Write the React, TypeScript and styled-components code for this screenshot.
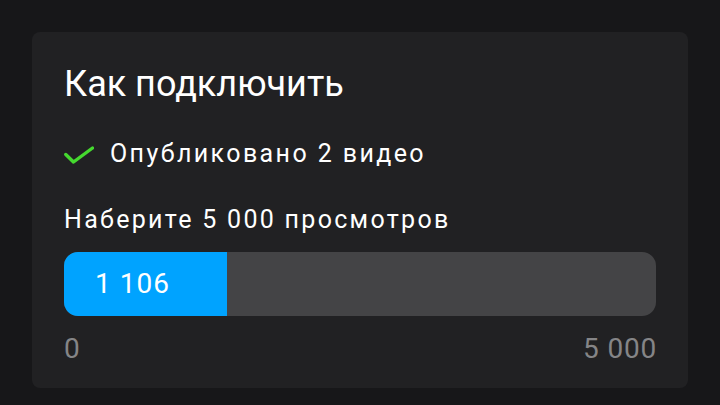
import React from "react";
import styled, { createGlobalStyle } from "styled-components";

const GlobalStyle = createGlobalStyle`
  html, body {
    margin: 0;
    padding: 0;
    background: #171719;
    font-family: Roboto, "Noto Sans", sans-serif;
    color: #fff;
  }
`;

const Page = styled.div`
  width: 720px;
  height: 405px;
  box-sizing: border-box;
  padding: 32px 32px 17px 32px;
  display: flex;
`;

const Card = styled.section`
  flex: 1;
  background: #212123;
  border-radius: 8px;
  padding: 30px 32px 0 32px;
  display: flex;
  flex-direction: column;
`;

const Title = styled.h2`
  margin: 0;
  font-size: 36px;
  font-weight: 400;
  line-height: 44px;
`;

const Step = styled.div`
  display: flex;
  align-items: center;
  gap: 16px;
  margin-top: 32px;
  font-size: 25px;
  line-height: 32px;
  letter-spacing: 2.4px;
`;

const Goal = styled.div`
  margin-top: 34px;
  font-size: 25px;
  line-height: 32px;
  letter-spacing: 2.3px;
`;

const Track = styled.div`
  margin-top: 16px;
  height: 64px;
  border-radius: 14px;
  background: #444446;
  overflow: hidden;
  display: flex;
`;

const Fill = styled.div`
  background: #00a3ff;
  display: flex;
  align-items: center;
  padding-left: 31px;
  box-sizing: border-box;
  font-size: 28px;
  line-height: 32px;
  letter-spacing: 1px;
`;

const Scale = styled.div`
  display: flex;
  justify-content: space-between;
  margin-top: 17px;
  font-size: 28px;
  line-height: 32px;
  letter-spacing: 0.8px;
  color: #858587;

  span:last-child {
    margin-right: -1px;
  }
`;

function Check() {
  return (
    <svg width="30" height="22" viewBox="0 0 30 22" fill="none">
      <path
        d="M1.8 11.5 L9.5 19 L28.5 5"
        stroke="#45d92f"
        strokeWidth="3.4"
        strokeLinecap="round"
        strokeLinejoin="round"
      />
    </svg>
  );
}

export default function App() {
  const views = 1106;
  const goal = 5000;
  // the fill keeps room for its label even at low counts
  const share = Math.max(views / goal, 0.275);

  return (
    <>
      <GlobalStyle />
      <Page>
        <Card>
          <Title>Как подключить</Title>
          <Step>
            <Check />
            <span>Опубликовано 2 видео</span>
          </Step>
          <Goal>Наберите 5 000 просмотров</Goal>
          <Track>
            <Fill style={{ width: `${share * 100}%` }}>1 106</Fill>
          </Track>
          <Scale>
            <span>0</span>
            <span>5 000</span>
          </Scale>
        </Card>
      </Page>
    </>
  );
}
